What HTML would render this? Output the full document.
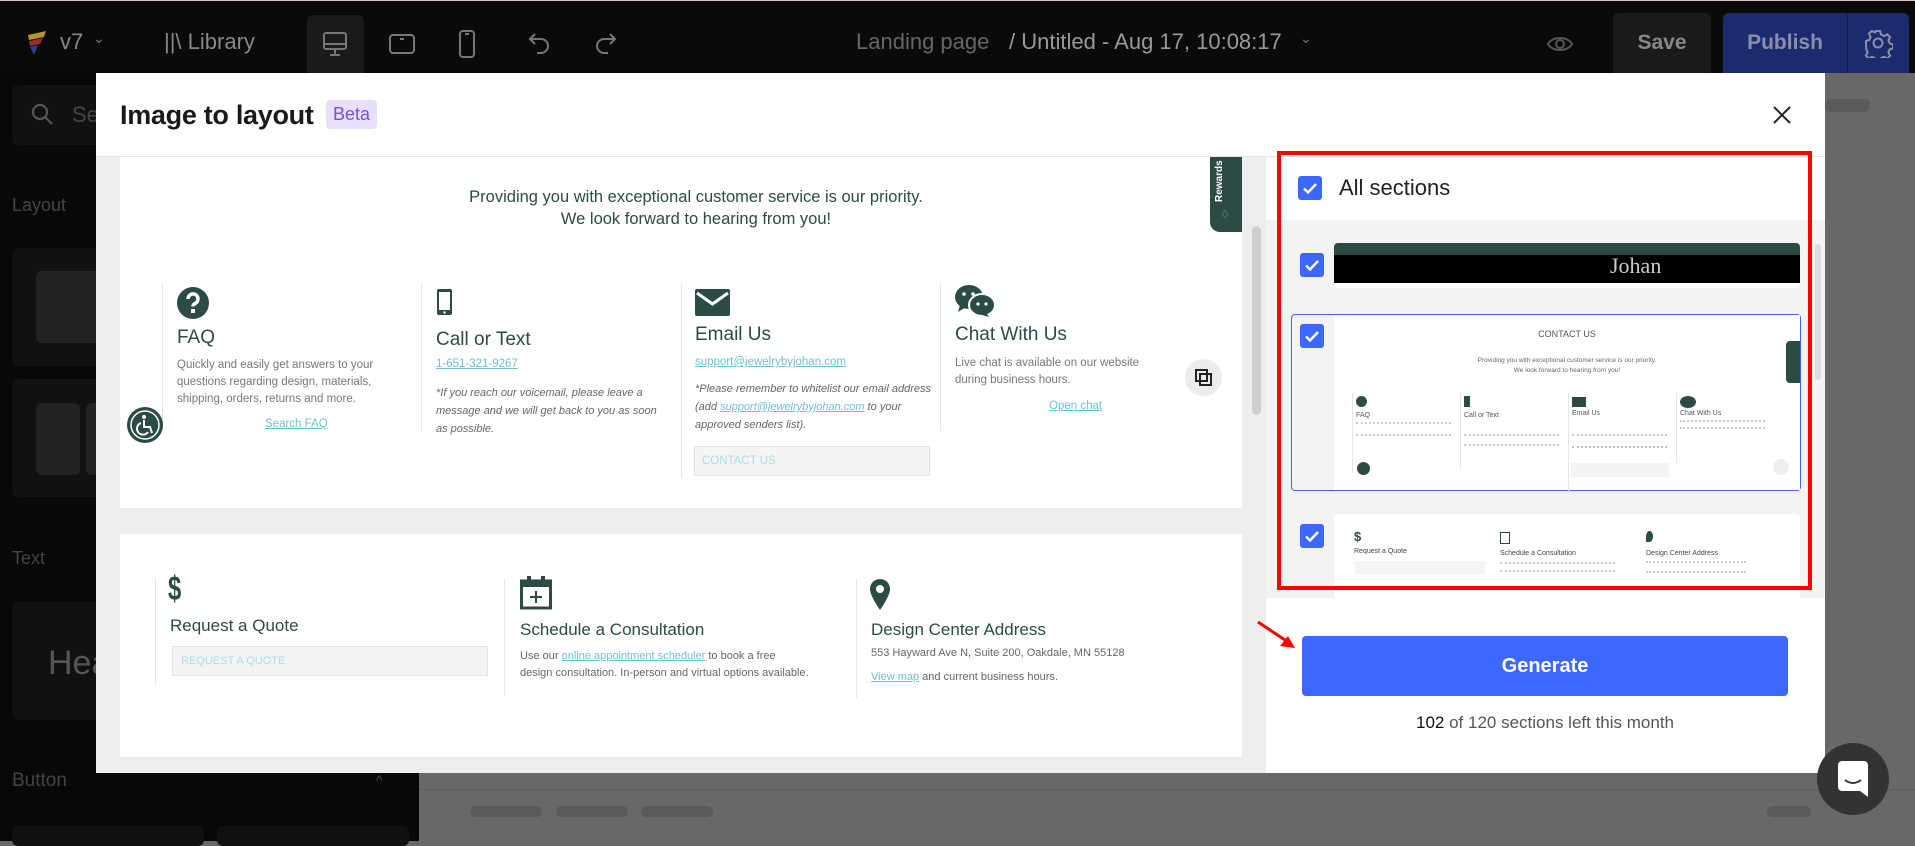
<!DOCTYPE html>
<html><head><meta charset="utf-8"><style>
*{margin:0;padding:0;box-sizing:border-box}
body{width:1915px;height:841px;overflow:hidden;background:#686868;font-family:"Liberation Sans",sans-serif;position:relative}
.a{position:absolute}
.tb{color:#777;font-size:22px}
.g{color:#2d4b45}
.desc{color:#777;font-size:11.5px;line-height:17px}
.it{color:#666;font-size:11px;font-style:italic;line-height:18px}
.lnk{color:#6cc3d0;text-decoration:underline}
.vl{width:1px;background:#e6e6e6}
.h{font-size:19px;color:#2d4b45}
.cb{width:24px;height:24px;background:#3d68ff;border-radius:3px}
.cb svg{display:block}
</style></head><body>
<!-- top bar -->
<div class="a" style="left:0;top:0;width:1915px;height:73px;background:#0a0a0a;border-top:1px solid #d9c6c6"></div>
<svg class="a" style="left:26px;top:31px" width="22" height="26" viewBox="0 0 22 26"><path d="M2 4 L20 0 L18 6 L3 9Z" fill="#b8952a"/><path d="M3 10 L17 7 L14 13 L4 15Z" fill="#9a2c3a"/><path d="M4 16 L12 14 L8 24Z" fill="#2b3f8c"/></svg>
<div class="a tb" style="left:60px;top:29px;color:#888">v7</div>
<div class="a" style="left:93px;top:30px;color:#777;font-size:14px">&#8964;</div>
<div class="a tb" style="left:164px;top:29px;color:#888">||\ Library</div>
<div class="a" style="left:307px;top:15px;width:57px;height:58px;background:#1a1a1a;border-radius:6px 6px 0 0"></div>
<svg class="a" style="left:321px;top:30px" width="28" height="28" viewBox="0 0 28 28" fill="none" stroke="#777" stroke-width="2"><rect x="3" y="3" width="22" height="16" rx="2"/><path d="M3 14H25M14 19V24M9 25H19"/></svg>
<svg class="a" style="left:388px;top:32px" width="28" height="24" viewBox="0 0 28 24" fill="none" stroke="#777" stroke-width="2"><rect x="2" y="3" width="24" height="18" rx="3"/><path d="M12 7H16"/></svg>
<svg class="a" style="left:458px;top:29px" width="18" height="30" viewBox="0 0 18 30" fill="none" stroke="#777" stroke-width="2"><rect x="2" y="2" width="14" height="26" rx="3"/><path d="M7 5H11"/></svg>
<svg class="a" style="left:527px;top:31px" width="26" height="26" viewBox="0 0 26 26" fill="none" stroke="#777" stroke-width="2"><path d="M8 3L3 8L8 13M3 8H14a7 7 0 0 1 0 14H10"/></svg>
<svg class="a" style="left:592px;top:31px" width="26" height="26" viewBox="0 0 26 26" fill="none" stroke="#777" stroke-width="2"><path d="M18 3L23 8L18 13M23 8H12a7 7 0 0 0 0 14H16"/></svg>
<div class="a tb" style="left:856px;top:29px;color:#666">Landing page</div>
<div class="a tb" style="left:1009px;top:29px;color:#999">/ Untitled - Aug 17, 10:08:17</div>
<div class="a" style="left:1300px;top:30px;color:#777;font-size:14px">&#8964;</div>
<svg class="a" style="left:1546px;top:30px" width="28" height="28" viewBox="0 0 28 28" fill="none" stroke="#555" stroke-width="2"><path d="M2 14C6 6 22 6 26 14C22 22 6 22 2 14Z"/><circle cx="14" cy="14" r="4"/></svg>
<div class="a" style="left:1613px;top:13px;width:98px;height:60px;background:#1a1a1a;border-radius:6px 6px 0 0;color:#888;font-size:21px;font-weight:bold;text-align:center;line-height:60px">Save</div>
<div class="a" style="left:1723px;top:13px;width:186px;height:60px;background:#1c2b6e;border-radius:6px 6px 0 0"></div>
<div class="a" style="left:1723px;top:13px;width:124px;height:60px;color:#8a90aa;font-size:21px;font-weight:bold;text-align:center;line-height:60px">Publish</div>
<div class="a" style="left:1847px;top:13px;width:1px;height:60px;background:#15204f"></div>
<svg class="a" style="left:1863px;top:28px" width="30" height="30" viewBox="0 0 30 30" fill="none" stroke="#8a90aa" stroke-width="2"><circle cx="15" cy="15" r="4.5"/><path d="M13 3h4l1 3.5 3 1.5 3.3-1.7 2.8 2.8-1.7 3.3 1.3 3 3.3 1v4l-3.3 1-1.3 3 1.7 3.3-2.8 2.8-3.3-1.7-3 1.3-1 3.3h-4l-1-3.3-3-1.3-3.3 1.7-2.8-2.8 1.7-3.3-1.3-3L3 17v-4l3.3-1 1.3-3-1.7-3.3 2.8-2.8L12 4.5Z"/></svg>
<!-- sidebar -->
<div class="a" style="left:0;top:73px;width:419px;height:768px;background:#080808"></div>
<div class="a" style="left:12px;top:85px;width:120px;height:60px;background:#111;border-radius:6px"></div>
<svg class="a" style="left:30px;top:102px" width="24" height="24" viewBox="0 0 24 24" fill="none" stroke="#555" stroke-width="2.2"><circle cx="10" cy="10" r="7"/><path d="M15 15L22 22"/></svg>
<div class="a" style="left:72px;top:102px;color:#444;font-size:22px">Se</div>
<div class="a" style="left:12px;top:195px;color:#444;font-size:18px">Layout</div>
<div class="a" style="left:12px;top:248px;width:110px;height:118px;background:#111;border-radius:6px"></div>
<div class="a" style="left:36px;top:271px;width:80px;height:72px;background:#222;border-radius:6px"></div>
<div class="a" style="left:12px;top:379px;width:110px;height:118px;background:#111;border-radius:6px"></div>
<div class="a" style="left:36px;top:403px;width:44px;height:72px;background:#222;border-radius:6px"></div>
<div class="a" style="left:86px;top:403px;width:20px;height:72px;background:#222;border-radius:6px"></div>
<div class="a" style="left:12px;top:548px;color:#444;font-size:18px">Text</div>
<div class="a" style="left:12px;top:602px;width:110px;height:118px;background:#111;border-radius:6px;color:#555;font-size:34px;padding:42px 0 0 36px">Hea</div>
<div class="a" style="left:12px;top:770px;color:#444;font-size:19px">Button</div>
<div class="a" style="left:376px;top:772px;color:#444;font-size:14px">^</div>
<div class="a" style="left:12px;top:826px;width:192px;height:20px;background:#111;border-radius:6px"></div>
<div class="a" style="left:217px;top:826px;width:192px;height:20px;background:#111;border-radius:6px"></div>
<!-- canvas bits -->
<div class="a" style="left:419px;top:789px;width:1496px;height:1px;background:#5f5f5f"></div>
<div class="a" style="left:470px;top:806px;width:72px;height:11px;background:#5a5a5a;border-radius:6px"></div>
<div class="a" style="left:556px;top:806px;width:72px;height:11px;background:#5a5a5a;border-radius:6px"></div>
<div class="a" style="left:641px;top:806px;width:72px;height:11px;background:#5a5a5a;border-radius:6px"></div>
<div class="a" style="left:1767px;top:806px;width:44px;height:11px;background:#5a5a5a;border-radius:6px"></div>
<div class="a" style="left:1825px;top:99px;width:45px;height:13px;background:#5a5a5a;border-radius:6px"></div>
<!-- modal -->
<div class="a" style="left:96px;top:73px;width:1729px;height:700px;background:#fff"></div>
<div class="a" style="left:120px;top:100px;font-size:27px;font-weight:bold;color:#1a1a1a;letter-spacing:-0.3px">Image to layout</div>
<div class="a" style="left:326px;top:100px;width:51px;height:29px;background:#eadffb;border-radius:4px;color:#7a4ef0;font-size:18px;text-align:center;line-height:29px">Beta</div>
<svg class="a" style="left:1772px;top:105px" width="20" height="20" viewBox="0 0 20 20" stroke="#222" stroke-width="2"><path d="M2 2L18 18M18 2L2 18"/></svg>
<div class="a" style="left:96px;top:156px;width:1729px;height:1px;background:#e5e5e5"></div>
<!-- left preview -->
<div class="a" style="left:96px;top:157px;width:1170px;height:616px;background:#eeeeee"></div>
<div class="a" style="left:1252px;top:226px;width:9px;height:189px;background:#cfcfcf;border-radius:5px"></div>
<div class="a" style="left:120px;top:157px;width:1122px;height:351px;background:#fff"></div>
<div class="a g" style="left:296px;top:186px;width:800px;text-align:center;font-size:16.5px;line-height:22px">Providing you with exceptional customer service is our priority.<br>We look forward to hearing from you!</div>
<div class="a" style="left:1210px;top:157px;width:32px;height:75px;background:#2d4b45;border-radius:0 0 0 10px"></div>
<div class="a" style="left:1214px;top:162px;width:24px;height:40px;color:#fff;font-size:10px;font-weight:bold;writing-mode:vertical-rl;transform:rotate(180deg)">Rewards</div>
<div class="a" style="left:1220px;top:208px;color:#ccc;font-size:11px">&#9826;</div>
<div class="a vl" style="left:162px;top:283px;height:148px"></div>
<div class="a vl" style="left:421px;top:283px;height:148px"></div>
<div class="a vl" style="left:681px;top:283px;height:195px"></div>
<div class="a vl" style="left:940px;top:283px;height:148px"></div>
<!-- col1 -->
<svg class="a" style="left:177px;top:287px" width="32" height="32" viewBox="0 0 32 32"><circle cx="16" cy="16" r="16" fill="#2d4b45"/><path d="M11 12a5 5 0 1 1 7 4.5c-1.5.7-2 1.5-2 3" stroke="#fff" stroke-width="3.5" fill="none"/><rect x="14" y="22" width="4" height="4" fill="#fff"/></svg>
<div class="a h" style="left:177px;top:327px">FAQ</div>
<div class="a desc" style="left:177px;top:357px;width:230px">Quickly and easily get answers to your questions regarding design, materials, shipping, orders, returns and more.</div>
<div class="a lnk" style="left:265px;top:418px;font-size:11.5px">Search FAQ</div>
<svg class="a" style="left:126px;top:406px" width="38" height="38" viewBox="0 0 38 38"><circle cx="19" cy="19" r="18" fill="#2d4b45"/><circle cx="19" cy="19" r="14" fill="none" stroke="#fff" stroke-width="1.5"/><circle cx="18" cy="11" r="2" fill="#fff"/><path d="M18 14v7h6l2 6M15 17a6 6 0 1 0 7 9" stroke="#fff" stroke-width="2" fill="none"/></svg>
<!-- col2 -->
<svg class="a" style="left:436px;top:288px" width="17" height="28" viewBox="0 0 17 28"><rect x="1" y="1" width="15" height="26" rx="2" fill="#2d4b45"/><rect x="3" y="4" width="11" height="18" fill="#fff"/><circle cx="8.5" cy="24.5" r="1.2" fill="#fff"/></svg>
<div class="a h" style="left:436px;top:329px">Call or Text</div>
<div class="a lnk" style="left:436px;top:358px;font-size:11.5px">1-651-321-9267</div>
<div class="a it" style="left:436px;top:384px;width:235px">*If you reach our voicemail, please leave a message and we will get back to you as soon as possible.</div>
<!-- col3 -->
<svg class="a" style="left:695px;top:289px" width="35" height="27" viewBox="0 0 35 27"><rect x="0" y="0" width="35" height="27" rx="2" fill="#2d4b45"/><path d="M2 4L17.5 15L33 4" stroke="#fff" stroke-width="3" fill="none"/></svg>
<div class="a h" style="left:695px;top:324px">Email Us</div>
<div class="a lnk" style="left:695px;top:356px;font-size:11.5px">support@jewelrybyjohan.com</div>
<div class="a it" style="left:695px;top:380px;width:240px">*Please remember to whitelist our email address (add <span class="lnk">support@jewelrybyjohan.com</span> to your approved senders list).</div>
<div class="a" style="left:694px;top:446px;width:236px;height:30px;background:#f4f4f4;border:1px solid #e4e4e4;color:#a8dde6;font-size:11.5px;line-height:28px;padding-left:7px">CONTACT US</div>
<!-- col4 -->
<svg class="a" style="left:955px;top:285px" width="40" height="32" viewBox="0 0 40 32"><ellipse cx="14" cy="12" rx="14" ry="12" fill="#2d4b45"/><path d="M5 20L3 27L11 22Z" fill="#2d4b45"/><ellipse cx="27" cy="20" rx="13" ry="11" fill="#2d4b45" stroke="#fff" stroke-width="2"/><path d="M32 29L34 32L27 30Z" fill="#2d4b45"/><circle cx="9" cy="9" r="1.8" fill="#fff"/><circle cx="18" cy="9" r="1.8" fill="#fff"/><circle cx="23" cy="19" r="1.6" fill="#fff"/><circle cx="31" cy="19" r="1.6" fill="#fff"/></svg>
<div class="a h" style="left:955px;top:324px">Chat With Us</div>
<div class="a desc" style="left:955px;top:355px;width:200px">Live chat is available on our website during business hours.</div>
<div class="a lnk" style="left:1049px;top:400px;font-size:11.5px">Open chat</div>
<div class="a" style="left:1185px;top:359px;width:37px;height:37px;border-radius:50%;background:#ececec"></div>
<svg class="a" style="left:1195px;top:369px" width="17" height="17" viewBox="0 0 17 17" fill="none" stroke="#222" stroke-width="2"><rect x="1" y="1" width="11" height="11"/><rect x="5" y="5" width="11" height="11"/></svg>
<!-- section 2 -->
<div class="a" style="left:120px;top:534px;width:1122px;height:223px;background:#fff"></div>
<div class="a vl" style="left:155px;top:578px;height:106px"></div>
<div class="a vl" style="left:504px;top:578px;height:118px"></div>
<div class="a vl" style="left:856px;top:578px;height:120px"></div>
<div class="a g" style="left:168px;top:570px;font-size:34px;font-weight:bold;transform:scaleX(0.7);transform-origin:left">$</div>
<div class="a g" style="left:170px;top:616px;font-size:17px">Request a Quote</div>
<div class="a" style="left:172px;top:646px;width:316px;height:30px;background:#f4f4f4;border:1px solid #e4e4e4;color:#a8dde6;font-size:11px;line-height:28px;padding-left:8px">REQUEST A QUOTE</div>
<svg class="a" style="left:520px;top:576px" width="32" height="34" viewBox="0 0 32 34"><rect x="1.5" y="5" width="29" height="27" fill="none" stroke="#2d4b45" stroke-width="3"/><rect x="1.5" y="5" width="29" height="6" fill="#2d4b45"/><rect x="7" y="0" width="4" height="9" fill="#2d4b45"/><rect x="21" y="0" width="4" height="9" fill="#2d4b45"/><path d="M16 15V27M10 21H22" stroke="#2d4b45" stroke-width="2"/></svg>
<div class="a g" style="left:520px;top:620px;font-size:17px">Schedule a Consultation</div>
<div class="a desc" style="left:520px;top:648px;width:290px;font-size:11px;color:#666">Use our <span class="lnk">online appointment scheduler</span> to book a free design consultation. In-person and virtual options available.</div>
<svg class="a" style="left:870px;top:579px" width="20" height="31" viewBox="0 0 20 31"><path d="M10 0a10 10 0 0 1 10 10c0 7-10 21-10 21S0 17 0 10A10 10 0 0 1 10 0Z" fill="#2d4b45"/><circle cx="10" cy="10" r="4" fill="#fff"/></svg>
<div class="a g" style="left:871px;top:620px;font-size:17px">Design Center Address</div>
<div class="a" style="left:871px;top:647px;font-size:11px;color:#666">553 Hayward Ave N, Suite 200, Oakdale, MN 55128</div>
<div class="a" style="left:871px;top:671px;font-size:11px;color:#666"><span class="lnk">View map</span> and current business hours.</div>
<!-- right panel -->
<div class="a" style="left:1266px;top:220px;width:559px;height:378px;background:#f3f3f3"></div>
<div class="a" style="left:1815px;top:244px;width:6px;height:136px;background:#ddd;border-radius:3px"></div>
<div class="a cb" style="left:1298px;top:176px"><svg width="24" height="24" viewBox="0 0 24 24"><path d="M6 12.5L10 16.5L18 8" stroke="#fff" stroke-width="2.5" fill="none"/></svg></div>
<div class="a" style="left:1339px;top:175px;font-size:22px;color:#222">All sections</div>
<!-- item1 -->
<div class="a cb" style="left:1300px;top:253px"><svg width="24" height="24" viewBox="0 0 24 24"><path d="M6 12.5L10 16.5L18 8" stroke="#fff" stroke-width="2.5" fill="none"/></svg></div>
<div class="a" style="left:1334px;top:243px;width:466px;height:45px;background:#fff;border-radius:4px"></div>
<div class="a" style="left:1334px;top:243px;width:466px;height:12px;background:#2d4b45;border-radius:4px 4px 0 0"></div>
<div class="a" style="left:1334px;top:255px;width:466px;height:28px;background:#000"></div>
<div class="a" style="left:1610px;top:253px;color:#ccc;font-size:22px;font-family:'Liberation Serif',serif">Johan</div>
<!-- item2 -->
<div class="a" style="left:1291px;top:314px;width:510px;height:177px;border:1.5px solid #3d68ff;border-radius:4px;background:#f3f3f3"></div>
<div class="a" style="left:1334px;top:315px;width:466px;height:175px;background:#fff"></div>
<div class="a cb" style="left:1300px;top:324px"><svg width="24" height="24" viewBox="0 0 24 24"><path d="M6 12.5L10 16.5L18 8" stroke="#fff" stroke-width="2.5" fill="none"/></svg></div>
<div class="a" style="left:1334px;top:329px;width:466px;text-align:center;font-size:9px;color:#555">CONTACT US</div>
<div class="a" style="left:1334px;top:356px;width:466px;text-align:center;font-size:6.5px;color:#667;line-height:10px">Providing you with exceptional customer service is our priority.<br>We look forward to hearing from you!</div>
<div class="a" style="left:1786px;top:341px;width:14px;height:42px;background:#2d4b45;border-radius:4px 0 0 4px"></div>
<div class="a" style="left:1357px;top:462px;width:13px;height:13px;border-radius:50%;background:#2d4b45"></div>
<div class="a" style="left:1777px;top:500px"></div>
<div class="a" style="left:1773px;top:459px;width:16px;height:16px;border-radius:50%;background:#eee"></div>
<div class="a" style="left:1356px;top:396px;width:11px;height:11px;border-radius:50%;background:#2d4b45"></div>
<div class="a" style="left:1464px;top:396px;width:6px;height:11px;background:#2d4b45"></div>
<div class="a" style="left:1572px;top:397px;width:14px;height:10px;background:#2d4b45"></div>
<div class="a" style="left:1680px;top:396px;width:16px;height:12px;border-radius:50%;background:#2d4b45"></div>
<div class="a" style="left:1356px;top:412px;font-size:7px;color:#555">FAQ</div>
<div class="a" style="left:1464px;top:412px;font-size:7px;color:#555">Call or Text</div>
<div class="a" style="left:1572px;top:410px;font-size:7px;color:#555">Email Us</div>
<div class="a" style="left:1680px;top:410px;font-size:7px;color:#555">Chat With Us</div>
<div class="a" style="left:1356px;top:422px;width:95px;height:14px;border-top:2px dotted #ccc;border-bottom:2px dotted #ccc"></div>
<div class="a" style="left:1464px;top:434px;width:95px;height:12px;border-top:2px dotted #ccc;border-bottom:2px dotted #ccc"></div>
<div class="a" style="left:1572px;top:434px;width:95px;height:14px;border-top:2px dotted #ccc;border-bottom:2px dotted #bbd"></div>
<div class="a" style="left:1680px;top:420px;width:85px;height:9px;border-top:2px dotted #ccc;border-bottom:2px dotted #ccc"></div>
<div class="a" style="left:1571px;top:463px;width:98px;height:14px;background:#f4f4f4"></div>
<div class="a vl" style="left:1352px;top:393px;height:80px"></div>
<div class="a vl" style="left:1460px;top:393px;height:75px"></div>
<div class="a vl" style="left:1568px;top:393px;height:100px"></div>
<div class="a vl" style="left:1676px;top:393px;height:70px"></div>
<!-- item3 -->
<div class="a cb" style="left:1300px;top:524px"><svg width="24" height="24" viewBox="0 0 24 24"><path d="M6 12.5L10 16.5L18 8" stroke="#fff" stroke-width="2.5" fill="none"/></svg></div>
<div class="a" style="left:1334px;top:514px;width:466px;height:84px;background:#fff;border-radius:4px 4px 0 0"></div>
<div class="a g" style="left:1354px;top:529px;font-size:13px;font-weight:bold">$</div>
<div class="a" style="left:1354px;top:548px;font-size:7px;color:#444">Request a Quote</div>
<div class="a" style="left:1355px;top:561px;width:130px;height:13px;background:#f4f4f4"></div>
<div class="a" style="left:1500px;top:532px;width:10px;height:12px;border:1.5px solid #2d4b45"></div>
<div class="a" style="left:1500px;top:550px;font-size:7px;color:#444">Schedule a Consultation</div>
<div class="a" style="left:1500px;top:562px;width:115px;height:10px;border-top:2px dotted #ccc;border-bottom:2px dotted #ccc"></div>
<div class="a" style="left:1646px;top:531px;width:7px;height:11px;border-radius:50% 50% 50% 0;background:#2d4b45"></div>
<div class="a" style="left:1646px;top:550px;font-size:7px;color:#444">Design Center Address</div>
<div class="a" style="left:1646px;top:561px;width:100px;height:12px;border-top:2px dotted #ccc;border-bottom:2px dotted #ccc"></div>
<!-- red box -->
<div class="a" style="left:1277px;top:151px;width:535px;height:439px;border:4px solid #ff0000"></div>
<!-- arrow -->
<svg class="a" style="left:1254px;top:618px" width="46" height="36" viewBox="0 0 46 36"><path d="M4 4L34 24" stroke="#f00" stroke-width="3"/><path d="M41 30L26 28L34 18Z" fill="#f00"/></svg>
<!-- generate -->
<div class="a" style="left:1302px;top:636px;width:486px;height:60px;background:#3d68ff;border-radius:4px;color:#fff;font-size:20px;font-weight:bold;text-align:center;line-height:60px">Generate</div>
<div class="a" style="left:1302px;top:713px;width:486px;text-align:center;font-size:17px;color:#555"><span style="color:#111">102</span> of 120 sections left this month</div>
<!-- chat bubble -->
<div class="a" style="left:1817px;top:743px;width:72px;height:72px;border-radius:50%;background:#333"></div>
<svg class="a" style="left:1838px;top:761px" width="30" height="36" viewBox="0 0 30 36"><path d="M4 0H26a4 4 0 0 1 4 4V36L22 30H4a4 4 0 0 1-4-4V4a4 4 0 0 1 4-4Z" fill="#fff"/><path d="M7 19Q15 25 23 19" stroke="#333" stroke-width="2" fill="none"/></svg>
</body></html>
